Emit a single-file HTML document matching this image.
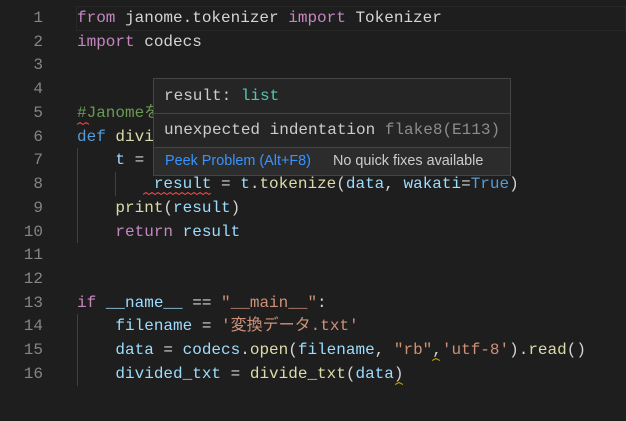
<!DOCTYPE html>
<html><head><meta charset="utf-8"><style>
body{margin:0;width:626px;height:421px;background:#1e1e1e;overflow:hidden;position:relative;font-family:"Liberation Mono","Noto Sans CJK JP",monospace;font-size:16px;}
.ln{position:absolute;left:0;width:43px;text-align:right;color:#858585;height:24px;line-height:24px;}
.c{position:absolute;left:77px;color:#d4d4d4;white-space:pre;height:24px;line-height:24px;}
.k{color:#c586c0}.b{color:#569cd6}.v{color:#9cdcfe}.f{color:#dcdcaa}.s{color:#ce9178}.g{color:#6a9955}
.guide{position:absolute;width:1px;background:#404040;}
.sq{position:absolute;height:3px;}
#hover{position:absolute;left:153px;top:78px;width:356px;height:96px;background:#252526;border:1px solid #454545;font-size:16px;}
</style></head><body>
<div style="position:absolute;left:76px;top:6px;width:550px;height:25px;border:1px solid #282828;box-sizing:border-box"></div>
<div class="ln" style="top:6px">1</div><div class="c" style="top:6px"><span class="k">from</span> janome.tokenizer <span class="k">import</span> Tokenizer</div>
<div class="ln" style="top:30px">2</div><div class="c" style="top:30px"><span class="k">import</span> codecs</div>
<div class="ln" style="top:53px">3</div>
<div class="ln" style="top:77px">4</div>
<div class="ln" style="top:101px">5</div><div class="c" style="top:101px"><span class="g">#Janomeを</span></div>
<div class="ln" style="top:125px">6</div><div class="c" style="top:125px"><span class="b">def</span> <span class="f">divi</span></div>
<div class="ln" style="top:148px">7</div><div class="c" style="top:148px">    <span class="v">t</span> = </div>
<div class="ln" style="top:172px">8</div><div class="c" style="top:172px">        <span class="v">result</span> = <span class="v">t</span>.<span class="f">tokenize</span>(<span class="v">data</span>, <span class="v">wakati</span>=<span class="b">True</span>)</div>
<div class="ln" style="top:196px">9</div><div class="c" style="top:196px">    <span class="f">print</span>(<span class="v">result</span>)</div>
<div class="ln" style="top:220px">10</div><div class="c" style="top:220px">    <span class="k">return</span> <span class="v">result</span></div>
<div class="ln" style="top:243px">11</div>
<div class="ln" style="top:267px">12</div>
<div class="ln" style="top:291px">13</div><div class="c" style="top:291px"><span class="k">if</span> <span class="v">__name__</span> == <span class="s">"__main__"</span>:</div>
<div class="ln" style="top:314px">14</div><div class="c" style="top:314px">    <span class="v">filename</span> = <span class="s">'変換データ.txt'</span></div>
<div class="ln" style="top:338px">15</div><div class="c" style="top:338px">    <span class="v">data</span> = <span class="v">codecs</span>.<span class="f">open</span>(<span class="v">filename</span>, <span class="s">"rb"</span>,<span class="s">'utf-8'</span>).<span class="f">read</span>()</div>
<div class="ln" style="top:362px">16</div><div class="c" style="top:362px">    <span class="v">divided_txt</span> = <span class="f">divide_txt</span>(<span class="v">data</span>)</div>
<div class="guide" style="left:77px;top:148px;height:95px"></div>
<div class="guide" style="left:115px;top:172px;height:24px"></div>
<div class="guide" style="left:77px;top:314px;height:72px"></div>
<svg class="sq" style="left:77px;top:122px;width:12px" viewBox="0 0 12 3"><path d="M0 2.5L3 .5L6 2.5L9 .5L12 2.5" stroke="#f14c4c" fill="none" stroke-width="1"/></svg>
<svg class="sq" style="left:143px;top:192px;width:68px" viewBox="0 0 68 3"><path d="M0 2.5L3 .5L6 2.5L9 .5L12 2.5L15 .5L18 2.5L21 .5L24 2.5L27 .5L30 2.5L33 .5L36 2.5L39 .5L42 2.5L45 .5L48 2.5L51 .5L54 2.5L57 .5L60 2.5L63 .5L66 2.5L68 1" stroke="#f14c4c" fill="none" stroke-width="1"/></svg>
<svg class="sq" style="left:432px;top:358px;width:8px" viewBox="0 0 8 3"><path d="M0 2.5L4 .5L8 2.5" stroke="#cca700" fill="none"/></svg>
<svg class="sq" style="left:395px;top:382px;width:8px" viewBox="0 0 8 3"><path d="M0 2.5L4 .5L8 2.5" stroke="#cca700" fill="none"/></svg>
<div id="hover">
<div style="position:absolute;left:10px;top:8px;color:#cccccc;white-space:pre">result: <span style="color:#4ec9b0">list</span></div>
<div style="position:absolute;left:0;top:34px;width:356px;height:1px;background:#454545"></div>
<div style="position:absolute;left:10px;top:42px;color:#cccccc;white-space:pre">unexpected indentation <span style="color:#8c8c8c">flake8(E113)</span></div>
<div style="position:absolute;left:0;top:68px;width:356px;height:28px;background:#2c2c2d;border-top:1px solid #454545;box-sizing:border-box;font-family:'Liberation Sans',sans-serif;font-size:14.4px;line-height:26px">
<span style="position:absolute;left:11px;color:#3794ff">Peek Problem (Alt+F8)</span>
<span style="position:absolute;left:179px;color:#cccccc">No quick fixes available</span>
</div>
</div>
</body></html>
